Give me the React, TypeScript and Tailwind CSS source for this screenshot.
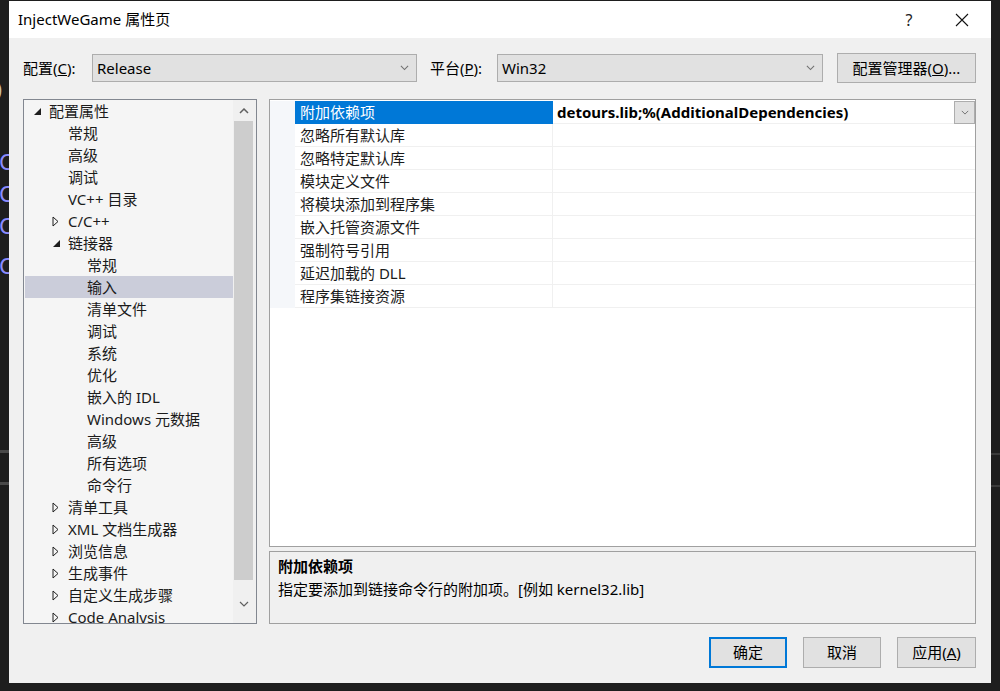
import React from "react";

type TreeItem = { label: string; level: number; state?: "open" | "closed"; selected?: boolean };

const tree: TreeItem[] = [
  { label: "配置属性", level: 0, state: "open" },
  { label: "常规", level: 1 },
  { label: "高级", level: 1 },
  { label: "调试", level: 1 },
  { label: "VC++ 目录", level: 1 },
  { label: "C/C++", level: 1, state: "closed" },
  { label: "链接器", level: 1, state: "open" },
  { label: "常规", level: 2 },
  { label: "输入", level: 2, selected: true },
  { label: "清单文件", level: 2 },
  { label: "调试", level: 2 },
  { label: "系统", level: 2 },
  { label: "优化", level: 2 },
  { label: "嵌入的 IDL", level: 2 },
  { label: "Windows 元数据", level: 2 },
  { label: "高级", level: 2 },
  { label: "所有选项", level: 2 },
  { label: "命令行", level: 2 },
  { label: "清单工具", level: 1, state: "closed" },
  { label: "XML 文档生成器", level: 1, state: "closed" },
  { label: "浏览信息", level: 1, state: "closed" },
  { label: "生成事件", level: 1, state: "closed" },
  { label: "自定义生成步骤", level: 1, state: "closed" },
  { label: "Code Analysis", level: 1, state: "closed" },
];

const props = [
  "附加依赖项",
  "忽略所有默认库",
  "忽略特定默认库",
  "模块定义文件",
  "将模块添加到程序集",
  "嵌入托管资源文件",
  "强制符号引用",
  "延迟加载的 DLL",
  "程序集链接资源",
];

function Chevron({ dir = "down", color = "#606060", w = 9 }: { dir?: "down" | "up"; color?: string; w?: number }) {
  return (
    <svg width={w} height={w / 2 + 1} viewBox="0 0 10 6" fill="none">
      {dir === "down" ? (
        <path d="M1 1 L5 5 L9 1" stroke={color} strokeWidth="1.2" />
      ) : (
        <path d="M1 5 L5 1 L9 5" stroke={color} strokeWidth="1.5" />
      )}
    </svg>
  );
}

function Expander({ state }: { state?: "open" | "closed" }) {
  if (state === "open")
    return (
      <svg width="9" height="9" viewBox="0 0 9 9">
        <path d="M8 1 L8 8 L1 8 Z" fill="#1e1e1e" />
      </svg>
    );
  if (state === "closed")
    return (
      <svg width="7" height="11" viewBox="0 0 7 11">
        <path d="M1 1 L6 5.5 L1 10 Z" fill="none" stroke="#1e1e1e" strokeWidth="1" />
      </svg>
    );
  return null;
}

function Select({ value, w }: { value: string; w: string }) {
  return (
    <div className={`${w} h-[28px] bg-[#e1e1e1] border border-[#adadad] flex items-center justify-between pl-[4px] pr-[7px]`}>
      <span className="text-[15px] text-[#000]">{value}</span>
      <Chevron color="#707070" w={9} />
    </div>
  );
}

export default function App() {
  return (
    <div className="w-[1000px] h-[691px] bg-[#1e1e1e] flex overflow-hidden font-['Noto_Sans','Noto_Sans_CJK_SC',sans-serif] text-[#000]">
      {/* left backdrop strip */}
      <div className="w-[9px] shrink-0 overflow-hidden flex flex-col leading-none">
        <div className="mt-[79px] ml-[-4px] text-[20px] text-[#c8c0a8]">)</div>
        <div className="mt-[51px] ml-[-1px] flex flex-col gap-[10px] text-[#8c8cff] text-[22px]">
          <span>C</span>
          <span>Cl</span>
          <span>Cl</span>
          <span className="mt-[8px]">C</span>
        </div>
        <div className="mt-[174px] h-[3px] bg-[#4a4a4a]" />
        <div className="mt-[29px] h-[3px] bg-[#4a4a4a]" />
      </div>

      {/* dialog */}
      <div className="w-[982px] h-[682px] mt-[1px] shrink-0 bg-[#f0f0f0] flex flex-col">
        {/* title bar */}
        <div className="h-[37px] bg-white flex items-center pl-[9px]">
          <span className="text-[15px] text-[#000] flex-1">InjectWeGame 属性页</span>
          <span className="text-[16px] text-[#222] w-[20px] text-center mr-[36px]">?</span>
          <svg width="14" height="14" viewBox="0 0 14 14" className="mr-[22px]">
            <path d="M1 1 L13 13 M13 1 L1 13" stroke="#111" strokeWidth="1.1" />
          </svg>
        </div>

        <div className="flex-1 flex flex-col pl-[14px] pr-[15px]">
          {/* config row */}
          <div className="flex items-center mt-[15px] h-[30px]">
            <span className="w-[69px] text-[15px]">
              配置(<span className="underline">C</span>):
            </span>
            <Select value="Release" w="w-[325px]" />
            <span className="w-[67px] ml-[13px] text-[15px]">
              平台(<span className="underline">P</span>):
            </span>
            <Select value="Win32" w="w-[326px]" />
            <div className="ml-[14px] w-[139px] h-[30px] bg-[#e1e1e1] border border-[#adadad] flex items-center justify-center text-[15px]">
              配置管理器(<span className="underline">O</span>)...
            </div>
          </div>

          {/* main */}
          <div className="flex mt-[16px] h-[525px]">
            {/* tree */}
            <div className="w-[234px] h-full border border-[#828790] bg-[#f5f5f5] flex overflow-hidden">
              <div className="flex-1 flex flex-col overflow-hidden">
                {tree.map((t, i) => (
                  <div
                    key={i}
                    className={`h-[22px] shrink-0 flex items-center ml-[1px] text-[15px] ${t.selected ? "bg-[#cbcdda]" : ""}`}
                  >
                    <div
                      className="flex items-center"
                      style={{ paddingLeft: 8 + t.level * 19 }}
                    >
                      <div className="w-[16px] flex items-center justify-start">
                        <Expander state={t.state} />
                      </div>
                      <span className="whitespace-nowrap text-[#1b1b1b]">{t.label}</span>
                    </div>
                  </div>
                ))}
              </div>
              <div className="w-[23px] h-full bg-[#f0f0f0] flex flex-col items-center pr-[2px]">
                <div className="h-[21px] flex items-center justify-center">
                  <Chevron dir="up" w={10} />
                </div>
                <div className="w-[19px] h-[459px] bg-[#cdcdcd]" />
                <div className="flex-1 flex items-center justify-center pt-[4px]">
                  <Chevron dir="down" w={10} />
                </div>
              </div>
            </div>

            {/* right side */}
            <div className="ml-[12px] flex-1 flex flex-col">
              <div className="h-[448px] border border-[#a0a0a0] bg-white pt-[1px] overflow-hidden">
                {props.map((p, i) => (
                  <div key={i} className="h-[23px] flex">
                    <div className="w-[25px] bg-[#f5f7fa]" />
                    <div
                      className={`w-[258px] flex items-center pl-[5px] text-[15px] border-b border-r ${
                        i === 0 ? "bg-[#0078d7] text-white border-[#0078d7]" : "border-[#f0f0f0] text-[#1b1b1b]"
                      }`}
                    >
                      {p}
                    </div>
                    <div className="flex-1 flex items-center border-b border-[#f0f0f0]">
                      {i === 0 && (
                        <>
                          <span className="flex-1 pl-[4px] text-[15px] font-bold text-[#000]">
                            detours.lib;%(AdditionalDependencies)
                          </span>
                          <div className="w-[21px] h-[23px] bg-[#e1e1e1] border border-[#adadad] flex items-center justify-center">
                            <Chevron color="#707070" w={8} />
                          </div>
                        </>
                      )}
                    </div>
                  </div>
                ))}
              </div>
              <div className="mt-[4px] flex-1 border border-[#a0a0a0] bg-[#f0f0f0] pl-[8px] pt-[3px]">
                <div className="text-[15px] font-bold leading-[23px]">附加依赖项</div>
                <div className="text-[15px] leading-[23px]">指定要添加到链接命令行的附加项。[例如 kernel32.lib]</div>
              </div>
            </div>
          </div>

          {/* buttons */}
          <div className="flex justify-end gap-[16px] mt-[13px]">
            <div className="w-[78px] h-[31px] bg-[#e1e1e1] border-2 border-[#0078d7] flex items-center justify-center text-[15px]">
              确定
            </div>
            <div className="w-[78px] h-[31px] bg-[#e1e1e1] border border-[#adadad] flex items-center justify-center text-[15px]">
              取消
            </div>
            <div className="w-[79px] h-[31px] bg-[#e1e1e1] border border-[#adadad] flex items-center justify-center text-[15px]">
              应用(<span className="underline">A</span>)
            </div>
          </div>
        </div>
      </div>

      {/* right backdrop strip */}
      <div className="flex-1 flex flex-col">
        <div className="mt-[453px] h-[2px] bg-[#3a3a3a]" />
        <div className="mt-[30px] h-[2px] bg-[#3a3a3a]" />
      </div>
    </div>
  );
}
